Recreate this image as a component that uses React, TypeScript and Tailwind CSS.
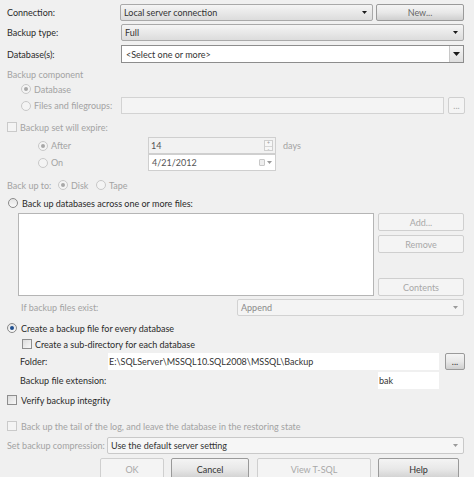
import React from "react";

const Arrow = ({ dim = false, big = false }: { dim?: boolean; big?: boolean }) => (
  <svg width={big ? 7 : 5} height={big ? 4 : 3} viewBox="0 0 7 4">
    <path d="M0 0H7L3.5 4Z" fill={dim ? "#9a9a9a" : "#1a1a1a"} />
  </svg>
);

const Drop = ({
  text,
  disabled = false,
  white = false,
  className = "",
}: {
  text: string;
  disabled?: boolean;
  white?: boolean;
  className?: string;
}) => {
  if (white)
    return (
      <div className={`flex items-stretch border border-[#8d8d8d] bg-white ${className}`}>
        <div className="flex flex-1 items-center pl-[4px] text-[#333]">{text}</div>
        <div className="flex w-[14px] items-center justify-center border-l border-[#c8c8c8] bg-gradient-to-b from-[#f6f6f6] to-[#dedede]">
          <Arrow big />
        </div>
      </div>
    );
  return (
    <div
      className={`flex items-center rounded-[2px] border px-[3px] ${
        disabled
          ? "border-[#d2d2d2] bg-[#f4f4f4] text-[#8a8a8a]"
          : "border-[#a9a9a9] bg-gradient-to-b from-[#f5f5f5] to-[#dcdcdc] text-[#333]"
      } ${className}`}
    >
      <div className="flex-1 whitespace-nowrap">{text}</div>
      <div className="pr-[2px]">
        <Arrow dim={disabled} />
      </div>
    </div>
  );
};

const Btn = ({
  text,
  disabled = false,
  className = "",
}: {
  text: string;
  disabled?: boolean;
  className?: string;
}) => (
  <div
    className={`flex items-center justify-center rounded-[2px] border ${
      disabled
        ? "border-[#cfcfcf] bg-[#f4f4f4] text-[#a8a8a8]"
        : "border-[#9a9a9a] bg-gradient-to-b from-[#f4f4f4] via-[#e8e8e8] to-[#cfcfcf] text-[#333]"
    } ${className}`}
  >
    {text}
  </div>
);

const Radio = ({ checked = false, disabled = false }: { checked?: boolean; disabled?: boolean }) => (
  <div
    className={`flex h-[10px] w-[10px] shrink-0 items-center justify-center rounded-full border ${
      disabled ? "border-[#c8c8c8] bg-[#f4f4f4]" : "border-[#8a8a8a] bg-gradient-to-b from-[#e4e4e4] to-[#fafafa]"
    }`}
  >
    {checked && (
      <div
        className={`h-[4px] w-[4px] rounded-full ${disabled ? "bg-[#a8a8a8]" : "bg-[#1f4f8f]"}`}
      />
    )}
  </div>
);

const Check = ({ disabled = false }: { disabled?: boolean }) => (
  <div
    className={`h-[10px] w-[10px] shrink-0 border ${
      disabled ? "border-[#cacaca] bg-[#f4f4f4]" : "border-[#8e8e8e] bg-gradient-to-br from-[#dcdcdc] to-[#f8f8f8]"
    }`}
  />
);

const dis = "text-[#a3a3a3]";

export default function App() {
  return (
    <div
      className="relative h-[477px] w-[474px] overflow-hidden whitespace-nowrap bg-[#f0f0f0] text-[9px] leading-none text-[#2a2a2a]"
      style={{ fontFamily: "Lato, 'Open Sans', sans-serif" }}
    >
      <div className="flex flex-col pt-[4px]">
        {/* Connection */}
        <div className="flex h-[17px] items-center">
          <div className="w-[120px] pl-[7px]">Connection:</div>
          <Drop text="Local server connection" className="h-[17px] w-[253px]" />
          <Btn text="New..." className="ml-[3px] h-[17px] w-[88px] !text-[#666]" />
        </div>
        {/* Backup type */}
        <div className="mt-[3px] flex h-[17px] items-center">
          <div className="w-[121px] pl-[7px]">Backup type:</div>
          <Drop text="Full" className="h-[17px] w-[343px]" />
        </div>
        {/* Databases */}
        <div className="mt-[4px] flex h-[18px] items-center">
          <div className="w-[121px] pl-[7px]">Database(s):</div>
          <Drop text="<Select one or more>" white className="h-[18px] w-[343px]" />
        </div>
        {/* Backup component */}
        <div className={`mt-[4px] flex h-[14px] items-center pl-[7px] ${dis}`}>Backup component</div>
        <div className={`mt-[1px] flex h-[14px] items-center gap-[3px] pl-[21px] ${dis}`}>
          <Radio checked disabled />
          <span>Database</span>
        </div>
        <div className="mt-[1px] flex h-[17px] items-center">
          <div className={`flex w-[121px] items-center gap-[3px] pl-[21px] ${dis}`}>
            <Radio disabled />
            <span>Files and filegroups:</span>
          </div>
          <div className="h-[17px] w-[323px] border border-[#d3d3d3] bg-[#f4f4f4]" />
          <Btn text="..." disabled className="ml-[4px] h-[17px] w-[17px]" />
        </div>
        {/* Backup set will expire */}
        <div className={`mt-[6px] flex h-[14px] items-center gap-[3px] pl-[7px] ${dis}`}>
          <Check disabled />
          <span>Backup set will expire:</span>
        </div>
        <div className="mt-[3px] flex h-[17px] items-center">
          <div className={`flex w-[148px] items-center gap-[3px] pl-[38px] ${dis}`}>
            <Radio checked disabled />
            <span>After</span>
          </div>
          <div className="flex h-[17px] w-[128px] items-stretch border border-[#cfcfcf] bg-[#f2f2f2]">
            <div className={`flex flex-1 items-center pl-[2px] text-[#555]`}>14</div>
            <div className="my-[2px] mr-[2px] flex w-[9px] flex-col border border-[#cfcfcf] bg-[#f7f7f7]">
              <div className="flex flex-1 items-center justify-center text-[5px] text-[#999]">+</div>
              <div className="flex flex-1 items-center justify-center border-t border-[#d6d6d6] text-[5px] text-[#999]">-</div>
            </div>
          </div>
          <span className={`ml-[7px] ${dis}`}>days</span>
        </div>
        <div className="flex h-[17px] items-center">
          <div className={`flex w-[148px] items-center gap-[3px] pl-[38px] ${dis}`}>
            <Radio disabled />
            <span>On</span>
          </div>
          <div className="flex h-[17px] w-[128px] items-center border border-[#cfcfcf] bg-white">
            <div className="flex-1 pl-[3px] text-[#555]">4/21/2012</div>
            <div className="mr-[2px] h-[7px] w-[6px] rounded-[1px] border border-[#c8c8c8] bg-[#eeeeee]" />
            <div className="mr-[3px]">
              <Arrow dim />
            </div>
          </div>
        </div>
        {/* Back up to */}
        <div className={`mt-[7px] flex h-[14px] items-center pl-[7px] ${dis}`}>
          <span className="w-[51px]">Back up to:</span>
          <Radio checked disabled />
          <span className="ml-[3px] w-[25px]">Disk</span>
          <Radio disabled />
          <span className="ml-[3px]">Tape</span>
        </div>
        {/* Back up across */}
        <div className="mt-[4px] flex h-[14px] items-center gap-[4px] pl-[8px]">
          <Radio />
          <span>Back up databases across one or more files:</span>
        </div>
        <div className="mt-[3px] flex h-[83px]">
          <div className="ml-[18px] h-[83px] w-[356px] border border-[#b5b5b5] bg-white" />
          <div className="ml-[4px] flex w-[86px] flex-col">
            <Btn text="Add..." disabled className="h-[18px]" />
            <Btn text="Remove" disabled className="mt-[4px] h-[18px]" />
            <div className="flex-1" />
            <Btn text="Contents" disabled className="h-[18px]" />
          </div>
        </div>
        <div className="mt-[3px] flex h-[17px] items-center">
          <div className={`w-[237px] pl-[21px] ${dis}`}>If backup files exist:</div>
          <Drop text="Append" disabled className="h-[17px] w-[227px]" />
        </div>
        {/* Create a backup file */}
        <div className="mt-[5px] flex h-[14px] items-center gap-[4px] pl-[7px]">
          <Radio checked />
          <span>Create a backup file for every database</span>
        </div>
        <div className="mt-[2px] flex h-[14px] items-center gap-[3px] pl-[22px]">
          <Check />
          <span>Create a sub-directory for each database</span>
        </div>
        <div className="mt-[2px] flex h-[17px] items-center">
          <div className="w-[108px] pl-[20px]">Folder:</div>
          <div className="flex h-[17px] w-[331px] items-center bg-white pl-[1px] text-[#333]">
            E:\SQLServer\MSSQL10.SQL2008\MSSQL\Backup
          </div>
          <Btn text="..." className="ml-[6px] h-[17px] w-[20px]" />
        </div>
        <div className="mt-[2px] flex h-[17px] items-center">
          <div className="w-[378px] pl-[20px]">Backup file extension:</div>
          <div className="flex h-[17px] w-[61px] items-center bg-white pl-[1px] text-[#333]">bak</div>
        </div>
        <div className="mt-[4px] flex h-[14px] items-center gap-[4px] pl-[7px]">
          <Check />
          <span>Verify backup integrity</span>
        </div>
        <div className={`mt-[12px] flex h-[14px] items-center gap-[4px] pl-[7px] ${dis}`}>
          <Check disabled />
          <span>Back up the tail of the log, and leave the database in the restoring state</span>
        </div>
        <div className="mt-[4px] flex h-[17px] items-center">
          <div className={`w-[107px] pl-[7px] ${dis}`}>Set backup compression:</div>
          <div className="flex h-[17px] w-[357px] items-center rounded-[2px] border border-[#c9c9c9] bg-[#f6f6f6] px-[3px] text-[#333]">
            <div className="flex-1">Use the default server setting</div>
            <div className="pr-[2px]">
              <Arrow dim />
            </div>
          </div>
        </div>
        <div className="mt-[4px] flex h-[22px] items-start pl-[100px]">
          <Btn text="OK" disabled className="h-[22px] w-[64px]" />
          <Btn text="Cancel" className="ml-[7px] h-[22px] w-[78px]" />
          <Btn text="View T-SQL" disabled className="ml-[8px] h-[22px] w-[114px]" />
          <Btn text="Help" className="ml-[7px] h-[22px] w-[81px]" />
        </div>
      </div>
    </div>
  );
}
